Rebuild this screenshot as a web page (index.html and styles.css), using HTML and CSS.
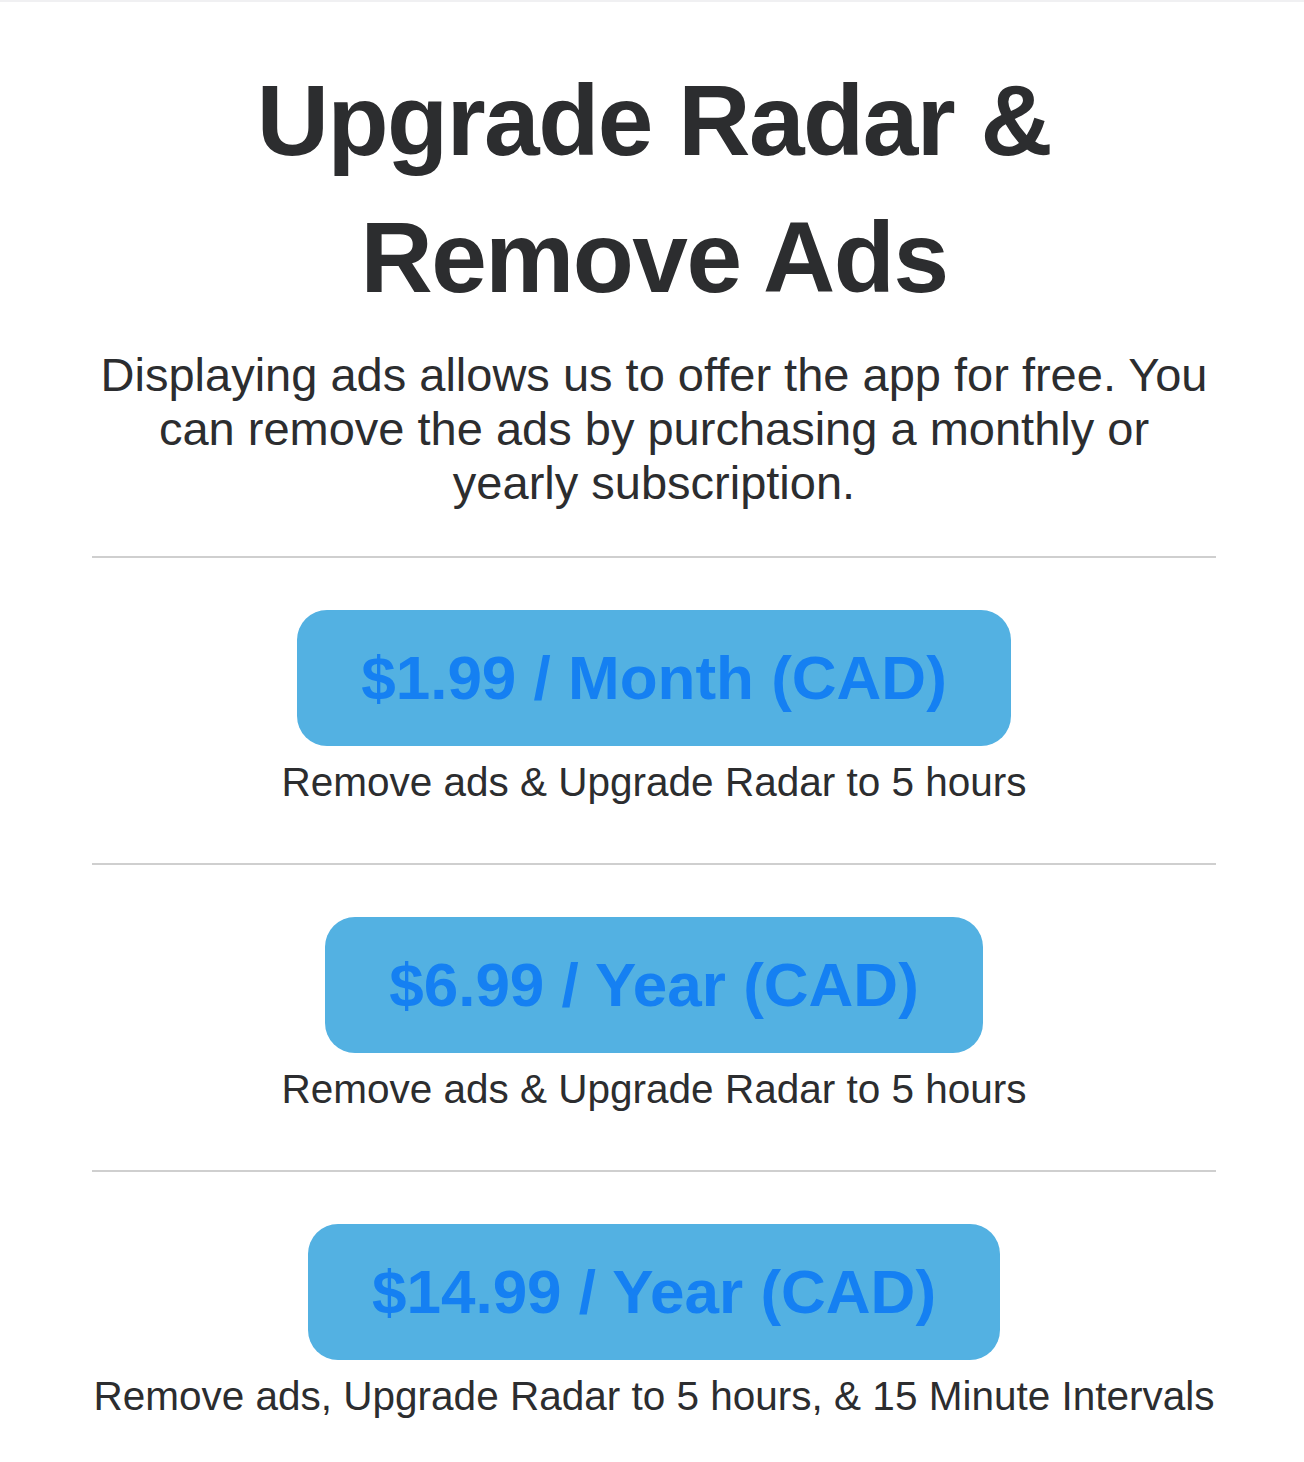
FILE: index.html
```html
<!DOCTYPE html>
<html lang="en">
<head>
  <meta charset="UTF-8">
  <title>Upgrade Radar & Remove Ads</title>
  <link rel="stylesheet" href="styles.css">
</head>
<body>

  <div class="page">
    <h1>Upgrade Radar &amp;<br>Remove Ads</h1>
    <p class="intro">Displaying ads allows us to offer the app for free. You can remove the ads by purchasing a monthly or yearly subscription.</p>

    <!-- one block per subscription option -->
    <div class="plan">
      <button class="buy">$1.99 / Month (CAD)</button>
      <div class="perks">Remove ads &amp; Upgrade Radar to 5 hours</div>
    </div>

    <div class="plan">
      <button class="buy">$6.99 / Year (CAD)</button>
      <div class="perks">Remove ads &amp; Upgrade Radar to 5 hours</div>
    </div>

    <div class="plan">
      <button class="buy">$14.99 / Year (CAD)</button>
      <div class="perks">Remove ads, Upgrade Radar to 5 hours, &amp; 15 Minute Intervals</div>
    </div>
  </div>

</body>
</html>
```

FILE: styles.css
```css
body {
  margin: 0;
  font-family: "Liberation Sans", Arial, sans-serif;
  color: #2c2d2f;
  background-color: #fff;
  border-top: 2px solid #f0f0f2;
}

.page {
  width: 1124px;
  margin: 0 0 0 92px;
  text-align: center;
}

h1 {
  margin: 50px 0 0;
  font-size: 100px;
  line-height: 137px;
  letter-spacing: -1.5px;
  font-weight: bold;
}

.intro {
  margin: 22px 0 46px;
  padding: 0 4px;
  font-size: 47px;
  line-height: 54px;
}

.plan {
  border-top: 2px solid #cfcfcf;
  padding: 52px 0 58px;
}

.plan:last-child {
  padding-bottom: 40px;
}

.buy {
  display: inline-block;
  height: 136px;
  padding: 0 64px;
  border: none;
  border-radius: 30px;
  background-color: #53b1e2;
  color: #1580f2;
  font-family: "Liberation Sans", Arial, sans-serif;
  font-size: 62px;
  font-weight: bold;
  line-height: 136px;
  cursor: pointer;
}

.perks {
  margin-top: 13px;
  font-size: 40.5px;
  line-height: 46px;
}
```
